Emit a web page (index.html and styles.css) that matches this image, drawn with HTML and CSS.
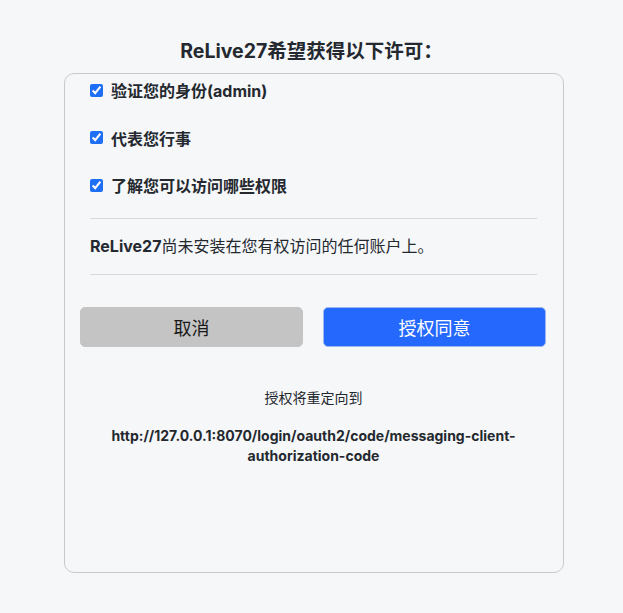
FILE: index.html
```html
<!DOCTYPE html>
<html lang="zh-CN">
<head>
  <meta charset="UTF-8" />
  <title>授权</title>
  <link rel="stylesheet" href="styles.css">
</head>
<body>
  <h1 class="title">ReLive27希望获得以下许可：</h1>

  <div class="card">
    <label class="scope"><input type="checkbox" checked> 验证您的身份(admin)</label>
    <label class="scope"><input type="checkbox" checked> 代表您行事</label>
    <label class="scope"><input type="checkbox" checked> 了解您可以访问哪些权限</label>

    <div class="notice">
      <b>ReLive27</b>尚未安装在您有权访问的任何账户上。
    </div>

    <div class="actions">
      <button class="btn btn-cancel">取消</button>
      <button class="btn btn-ok">授权同意</button>
    </div>

    <p class="redirect">授权将重定向到</p>
    <p class="redirect-url">http://127.0.0.1:8070/login/oauth2/code/messaging-client-authorization-code</p>
  </div>
</body>
</html>
```

FILE: styles.css
```css
* {
  box-sizing: border-box;
}

body {
  margin: 0;
  padding: 38px 0 0;
  background: #f6f7f9;
  color: #24292f;
  font-family: Inter, "Noto Sans CJK SC", sans-serif;
}

.title {
  margin: 0 0 9px;
  font-size: 19.5px;
  line-height: 26px;
  font-weight: 700;
  text-align: center;
}

.card {
  width: 500px;
  height: 500px;
  margin-left: 64px;
  padding: 6px 26px 0 25px;
  border: 1px solid #c9c9cb;
  border-radius: 10px;
}

.scope {
  display: flex;
  align-items: center;
  gap: 8px;
  height: 20px;
  margin-bottom: 27.5px;
  font-size: 16px;
  font-weight: 700;
}

.scope input {
  width: 13px;
  height: 13px;
  margin: 0;
  accent-color: #1f6ef6;
}

.notice {
  margin-top: -5px;
  padding: 17px 0 18px;
  border-top: 1px solid #d8d9db;
  border-bottom: 1px solid #d8d9db;
  font-size: 16px;
  line-height: 20px;
}

.actions {
  display: flex;
  gap: 20px;
  margin: 32px -9px 0 -10px;
}

.btn {
  flex: 1;
  height: 40px;
  border-radius: 5px;
  font-family: inherit;
  font-size: 18px;
  cursor: pointer;
}

.btn-cancel {
  background: #c4c4c4;
  border: 1px solid #c4c4c4;
  color: #1a1a1a;
}

.btn-ok {
  background: #2468fe;
  border: 1px solid #9bb8f0;
  color: #fff;
}

.redirect {
  margin: 41px 0 0;
  font-size: 14px;
  line-height: 20px;
  text-align: center;
}

.redirect-url {
  margin: 18px 0 0;
  padding: 0 10px;
  font-size: 14px;
  line-height: 20px;
  font-weight: 700;
  text-align: center;
}
```
